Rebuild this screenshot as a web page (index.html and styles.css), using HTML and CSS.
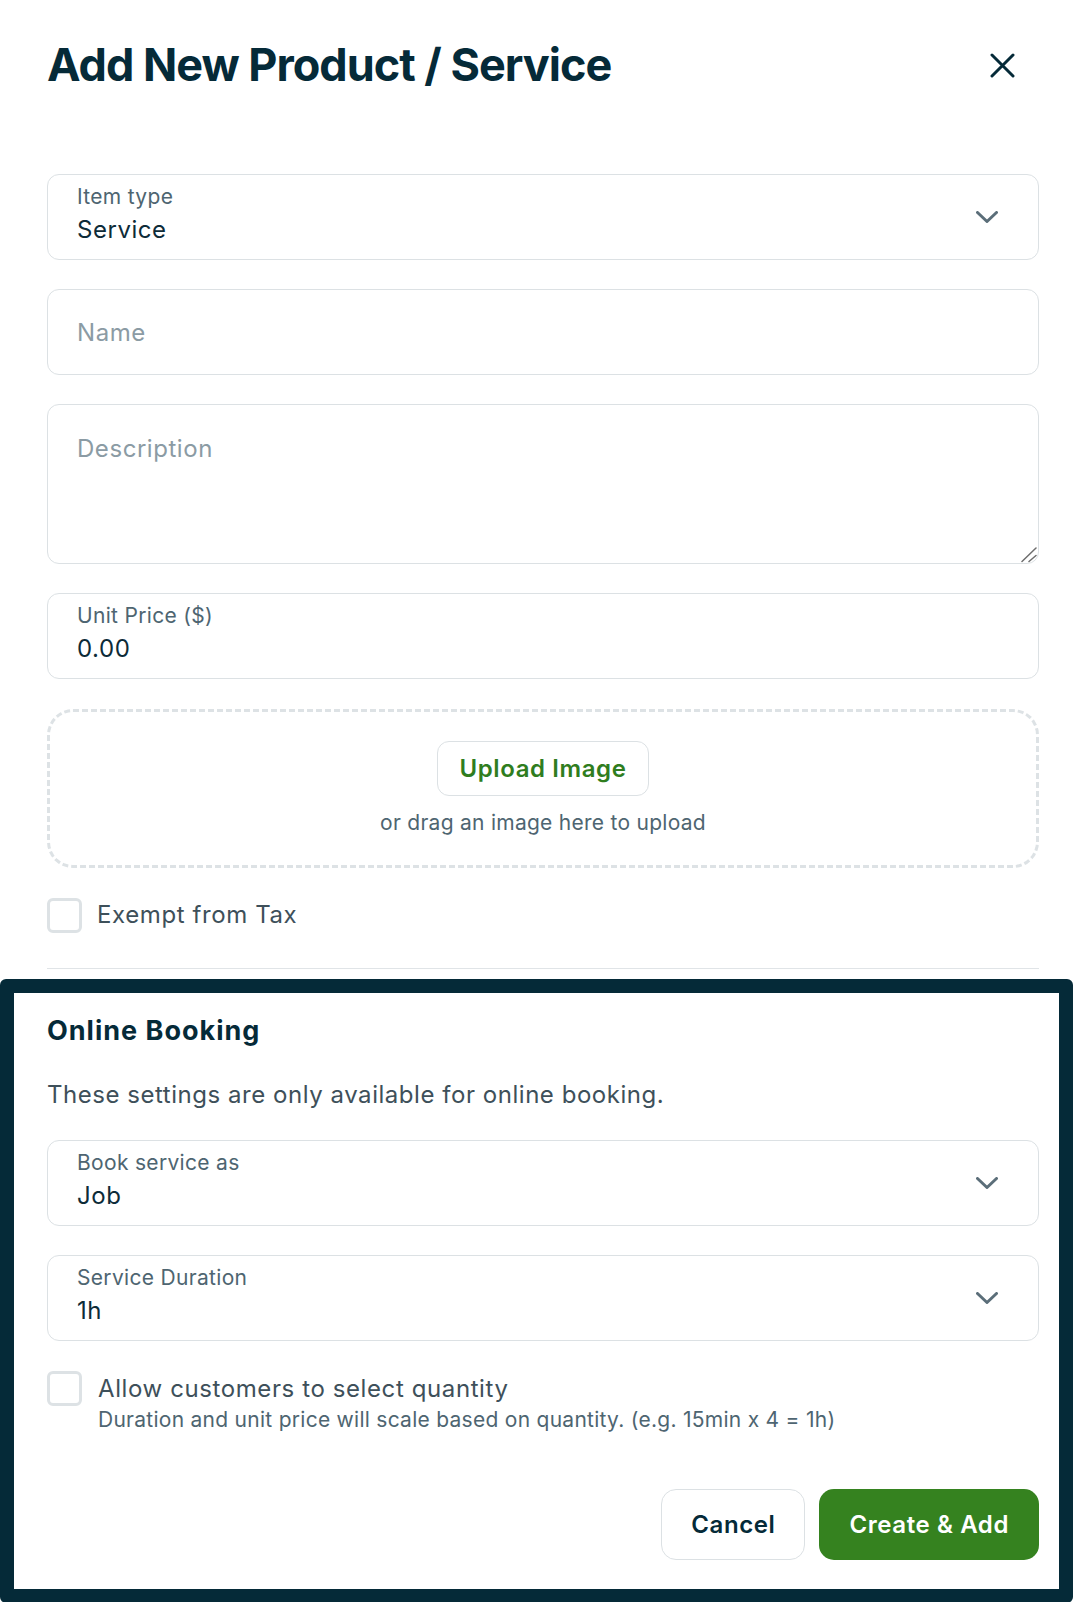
FILE: index.html
```html
<!DOCTYPE html>
<html lang="en">
<head>
<meta charset="utf-8">
<title>Add New Product / Service</title>
<link rel="stylesheet" href="styles.css">
</head>
<body>
<div class="modal">
  <header class="modal-header">
    <h1 class="modal-title">Add New Product / Service</h1>
    <button class="close-btn" aria-label="Close">
      <svg width="25" height="25" viewBox="0 0 25 25"><path d="M2 2 L23 23 M23 2 L2 23" fill="none" stroke="#052a38" stroke-width="3" stroke-linecap="round"/></svg>
    </button>
  </header>

  <form class="form">
    <div class="field">
      <div class="field-text">
        <div class="field-label">Item type</div>
        <div class="field-value">Service</div>
      </div>
      <svg class="chevron" width="22" height="12" viewBox="0 0 22 12"><path d="M1.5 1.5 L11 10.5 L20.5 1.5" fill="none" stroke="#5b6e79" stroke-width="3" stroke-linecap="round" stroke-linejoin="round"/></svg>
    </div>

    <input class="text-input" type="text" placeholder="Name">

    <div class="textarea-wrap">
      <textarea class="text-area" placeholder="Description"></textarea>
      <svg class="resize-handle" width="16" height="16" viewBox="0 0 16 16"><path d="M1 14.5 L15 1 M8 14.5 L15 8.5" fill="none" stroke="#6e6e6e" stroke-width="1.5" stroke-linecap="round"/></svg>
    </div>

    <div class="field">
      <div class="field-text">
        <div class="field-label">Unit Price ($)</div>
        <div class="field-value">0.00</div>
      </div>
    </div>

    <div class="upload">
      <button type="button" class="upload-btn">Upload Image</button>
      <div class="upload-hint">or drag an image here to upload</div>
    </div>

    <label class="check-row">
      <span class="checkbox"></span>
      <span class="check-label">Exempt from Tax</span>
    </label>
  </form>

  <hr class="divider">

  <section class="booking">
    <div class="highlight-frame"></div>
    <h2 class="booking-title">Online Booking</h2>
    <p class="booking-desc">These settings are only available for online booking.</p>

    <div class="field">
      <div class="field-text">
        <div class="field-label">Book service as</div>
        <div class="field-value">Job</div>
      </div>
      <svg class="chevron" width="22" height="12" viewBox="0 0 22 12"><path d="M1.5 1.5 L11 10.5 L20.5 1.5" fill="none" stroke="#5b6e79" stroke-width="3" stroke-linecap="round" stroke-linejoin="round"/></svg>
    </div>

    <div class="field field-spaced">
      <div class="field-text">
        <div class="field-label">Service Duration</div>
        <div class="field-value">1h</div>
      </div>
      <svg class="chevron" width="22" height="12" viewBox="0 0 22 12"><path d="M1.5 1.5 L11 10.5 L20.5 1.5" fill="none" stroke="#5b6e79" stroke-width="3" stroke-linecap="round" stroke-linejoin="round"/></svg>
    </div>

    <label class="check-row check-row-top">
      <span class="checkbox"></span>
      <span class="check-text">
        <span class="check-label">Allow customers to select quantity</span>
        <span class="check-help">Duration and unit price will scale based on quantity. (e.g. 15min x 4 = 1h)</span>
      </span>
    </label>

    <div class="actions">
      <button type="button" class="btn btn-secondary">Cancel</button>
      <button type="button" class="btn btn-primary">Create &amp; Add</button>
    </div>
  </section>
</div>
</body>
</html>
```

FILE: styles.css
```css
* {
  box-sizing: border-box;
}

html, body {
  margin: 0;
  padding: 0;
  background: #ffffff;
}

body {
  font-family: Inter, "Noto Sans", "Liberation Sans", sans-serif;
  color: #0d2b38;
}

.modal {
  width: 992px;
  margin-left: 47px;
  padding-top: 38px;
}

.modal-header {
  display: flex;
  align-items: center;
  justify-content: space-between;
  height: 54px;
}

.modal-title {
  margin: 0;
  font-size: 45px;
  line-height: 54px;
  font-weight: 700;
  letter-spacing: -1px;
  color: #052a38;
}

.close-btn {
  display: flex;
  padding: 0;
  margin-right: 24px;
  border: none;
  background: none;
}

.form {
  margin-top: 82px;
  display: flex;
  flex-direction: column;
  gap: 29px;
}

.field {
  display: flex;
  align-items: center;
  justify-content: space-between;
  border: 1px solid #dce1e4;
  border-radius: 12px;
  padding: 0 40px 0 29px;
  background: #fff;
}

.field-text {
  padding: 7px 0 11px;
}

.field-label {
  font-size: 21px;
  line-height: 30px;
  letter-spacing: 0.32px;
  color: #4e6571;
}

.field-value {
  font-size: 24px;
  line-height: 36px;
  letter-spacing: 0.55px;
  color: #0d2b38;
}

.text-input,
.text-area {
  display: block;
  width: 100%;
  border: 1px solid #dce1e4;
  border-radius: 12px;
  font-family: Inter, "Noto Sans", "Liberation Sans", sans-serif;
  font-size: 24px;
  letter-spacing: 0.55px;
  color: #0d2b38;
  background: #fff;
  outline: none;
  margin: 0;
}

.text-input {
  height: 86px;
  padding: 0 29px;
}

.textarea-wrap {
  position: relative;
}

.text-area {
  height: 160px;
  padding: 26px 29px 22px;
  line-height: 36px;
  resize: none;
}

.resize-handle {
  position: absolute;
  right: 2px;
  bottom: 1px;
  pointer-events: none;
}

.text-input::placeholder,
.text-area::placeholder {
  color: #8b9ba4;
  opacity: 1;
}

.upload {
  display: flex;
  flex-direction: column;
  align-items: center;
  border: 3px dashed #dde2e5;
  border-radius: 26px;
  padding: 29px 0 27px;
  margin-top: 1px;
}

.upload-btn {
  height: 55px;
  padding: 0 21px;
  border: 1px solid #dce1e4;
  border-radius: 12px;
  background: #fff;
  font-family: Inter, "Noto Sans", "Liberation Sans", sans-serif;
  font-size: 24px;
  font-weight: 600;
  letter-spacing: 0.6px;
  color: #2f7d1e;
}

.upload-hint {
  margin-top: 12px;
  font-size: 21px;
  line-height: 30px;
  letter-spacing: 0.27px;
  color: #4e6571;
}

.check-row {
  display: flex;
  align-items: center;
  gap: 15px;
  margin-top: 0;
}

.checkbox {
  flex: none;
  width: 35px;
  height: 35px;
  border: 3px solid #dde2e5;
  border-radius: 6px;
  background: #fff;
}

.check-label {
  font-size: 24px;
  line-height: 36px;
  letter-spacing: 0.6px;
  color: #3e505a;
}

.divider {
  margin: 35px 0 0;
  border: none;
  border-top: 1px solid #e0e4e7;
  height: 0;
}

.booking {
  position: relative;
  margin-top: 44px;
  padding-bottom: 43px;
}

.highlight-frame {
  position: absolute;
  top: -34px;
  left: -47px;
  right: -34px;
  bottom: 0;
  border: 14px solid #052a38;
  border-radius: 6px;
  pointer-events: none;
}

.booking-title {
  margin: 0;
  font-size: 27px;
  line-height: 36px;
  font-weight: 700;
  letter-spacing: 1px;
  color: #052a38;
}

.booking-desc {
  margin: 28px 0 27px;
  font-size: 24px;
  line-height: 36px;
  letter-spacing: 0.54px;
  color: #3e505a;
}

.field-spaced {
  margin-top: 29px;
}

.check-row-top {
  align-items: flex-start;
  gap: 16px;
  margin-top: 30px;
}

.check-text {
  display: flex;
  flex-direction: column;
}

.check-help {
  font-size: 21px;
  line-height: 26px;
  letter-spacing: 0.27px;
  color: #4e6571;
}

.actions {
  display: flex;
  justify-content: flex-end;
  gap: 14px;
  margin-top: 56px;
}

.btn {
  height: 71px;
  border-radius: 15px;
  font-family: Inter, "Noto Sans", "Liberation Sans", sans-serif;
  font-size: 24px;
  font-weight: 600;
  letter-spacing: 0.6px;
  cursor: pointer;
}

.btn-secondary {
  padding: 0 29px;
  background: #fff;
  border: 1px solid #dce1e4;
  color: #052a38;
}

.btn-primary {
  padding: 0 30px;
  background: #35821f;
  border: none;
  color: #fff;
}
```
